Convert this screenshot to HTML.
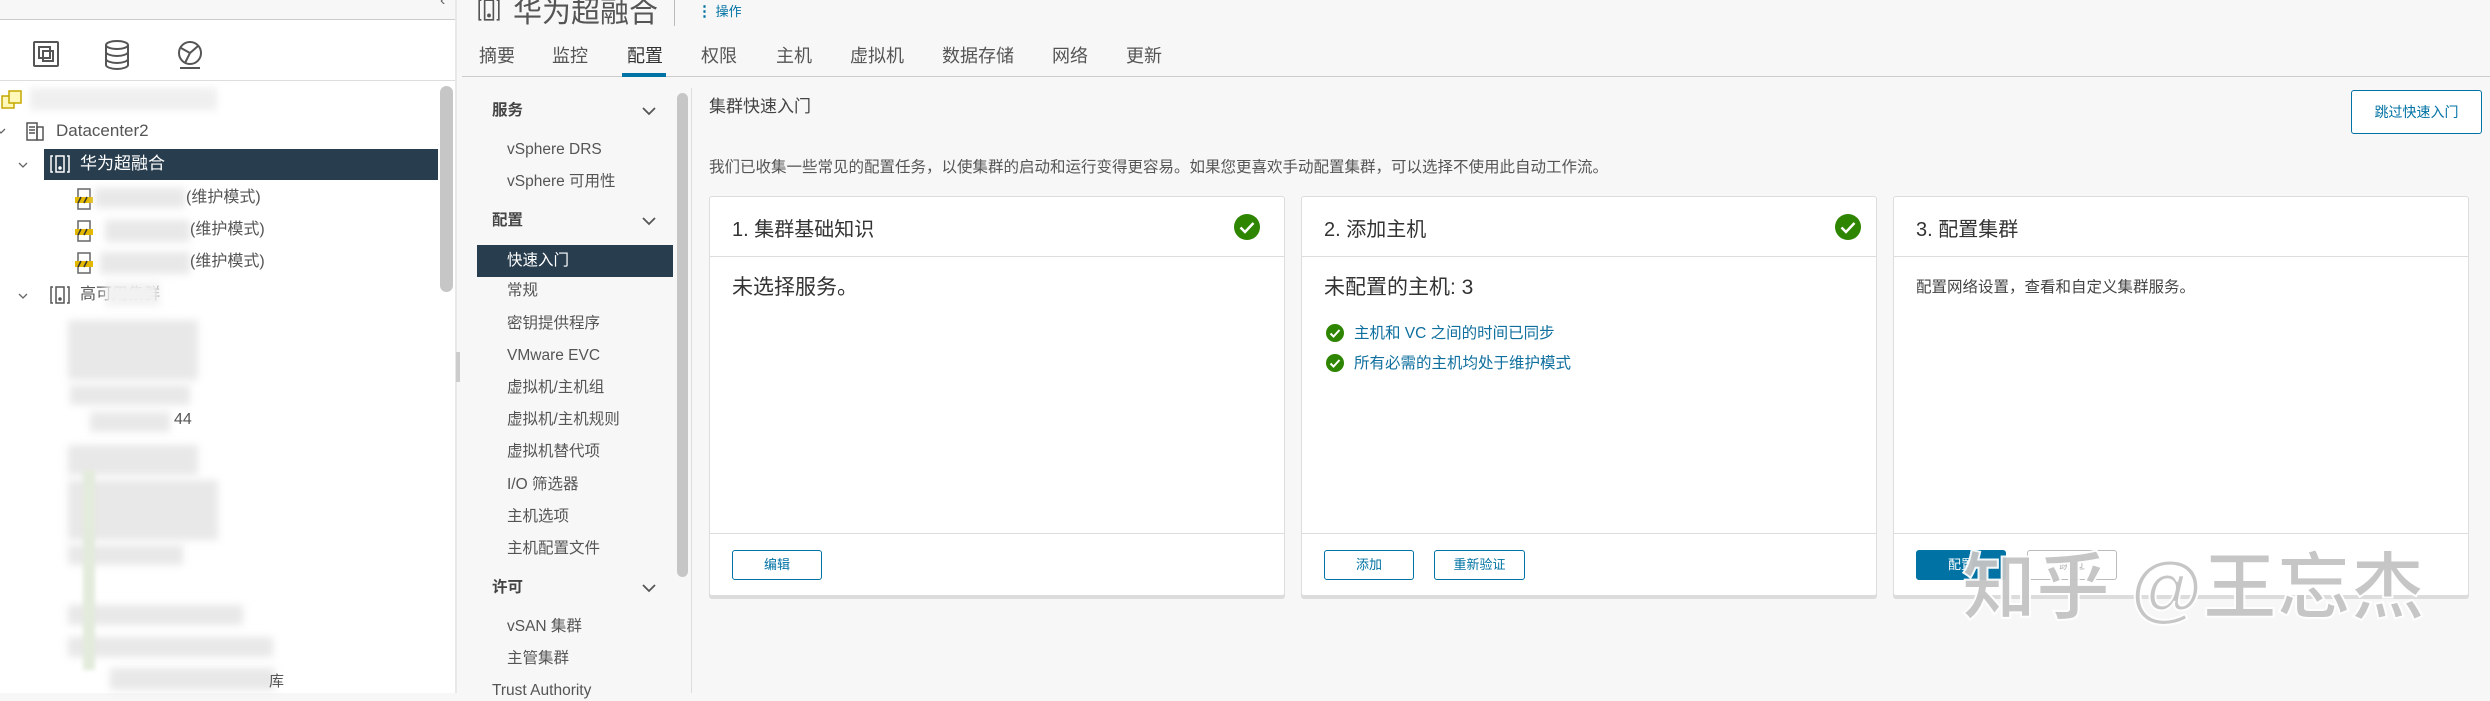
<!DOCTYPE html>
<html><head><meta charset="utf-8"><style>
*{margin:0;padding:0;box-sizing:border-box}
body{width:2490px;height:693px;overflow:hidden;background:#f7f7f7;font-family:"Liberation Sans","Noto Sans CJK SC",sans-serif;color:#444;position:relative}
.a{position:absolute;white-space:nowrap}
.t{font-size:16px;line-height:20px}
.nav{font-size:15.5px;color:#555;line-height:20px}
.card{position:absolute;top:196px;width:576px;height:400px;background:#fff;border:1px solid #ddd;border-radius:3px;box-shadow:0 3px 0 #dcdcdc}
.card .hd{position:absolute;left:0;right:0;top:0;height:60px;border-bottom:1px solid #ddd}
.card .ft{position:absolute;left:0;right:0;top:336px;border-top:1px solid #ddd}
.btn{position:absolute;height:30px;border:1px solid #0072a3;border-radius:3px;color:#0072a3;font-size:13px;line-height:28px;text-align:center;background:#fff}
.blur{position:absolute;background:#e8e8e8;filter:blur(4px)}
.tab{position:absolute;top:44px;font-size:18px;line-height:24px;color:#555;white-space:nowrap}
</style></head><body>
<!-- left panel -->
<div class="a" style="left:0;top:0;width:457px;height:693px;background:#fff"></div>
<div class="a" style="left:0;top:0;width:457px;height:20px;background:#f7f7f7;border-bottom:1px solid #ccc"></div>
<div class="a" style="left:440px;top:-8px;font-size:16px;color:#666">‹</div>
<div class="a" style="left:0;top:80px;width:457px;height:1px;background:#ddd"></div>
<svg class="a" style="left:32px;top:40px" width="30" height="30" viewBox="0 0 30 30" fill="none" stroke="#555" stroke-width="2"><rect x="2" y="2" width="24" height="24" rx="1"/><rect x="7" y="7" width="11" height="11"/><rect x="11" y="11" width="10" height="10"/></svg>
<svg class="a" style="left:103px;top:40px" width="28" height="30" viewBox="0 0 28 30" fill="none" stroke="#555" stroke-width="2"><ellipse cx="14" cy="5" rx="11" ry="4"/><path d="M3 5v20c0 2 5 4 11 4s11-2 11-4V5M3 12c0 2 5 4 11 4s11-2 11-4M3 19c0 2 5 4 11 4s11-2 11-4"/></svg>
<svg class="a" style="left:175px;top:40px" width="30" height="30" viewBox="0 0 30 30" fill="none" stroke="#555" stroke-width="2"><circle cx="15" cy="13" r="11"/><path d="M6 8l9 5 8-7M15 13l-5 10M5 28h20"/></svg>
<!-- tree -->
<svg class="a" style="left:1px;top:89px" width="22" height="22" viewBox="0 0 22 22" fill="#fff8b8" stroke="#c4a800" stroke-width="1.5"><rect x="1" y="7" width="12" height="12"/><rect x="8" y="2" width="12" height="12"/></svg>
<div class="blur" style="left:30px;top:88px;width:187px;height:22px;background:#efefef"></div>
<svg class="a" style="left:-4px;top:127px" width="10" height="8" viewBox="0 0 10 8" fill="none" stroke="#666" stroke-width="1.3"><path d="M1 2l4 4 4-4"/></svg>
<svg class="a" style="left:26px;top:121px" width="18" height="20" viewBox="0 0 18 20" fill="none" stroke="#555" stroke-width="1.5"><rect x="1" y="2" width="10" height="17"/><rect x="11" y="6" width="6" height="13"/><path d="M3 6h6M3 9h6M3 12h6"/></svg>
<div class="a" style="left:56px;top:120px;font-size:17px;line-height:22px;color:#555">Datacenter2</div>
<div class="a" style="left:44px;top:149px;width:394px;height:31px;background:#283d4e"></div>
<svg class="a" style="left:18px;top:161px" width="10" height="8" viewBox="0 0 10 8" fill="none" stroke="#666" stroke-width="1.3"><path d="M1 2l4 4 4-4"/></svg>
<svg class="a" style="left:50px;top:154px" width="20" height="20" viewBox="0 0 20 20" fill="none" stroke="#fff" stroke-width="1.5"><path d="M3 2H1v16h2M17 2h2v16h-2"/><rect x="6" y="2" width="8" height="16"/><circle cx="10" cy="14" r="1" fill="#fff"/></svg>
<div class="a" style="left:80px;top:153px;font-size:17px;line-height:22px;color:#fff">华为超融合</div>
<svg class="a" style="left:75px;top:188px" width="18" height="22" viewBox="0 0 18 22"><rect x="3" y="1" width="12" height="20" fill="#fff" stroke="#666" stroke-width="1.5"/><rect x="0" y="9" width="18" height="6" fill="#e2b800"/><path d="M3 15l3-6M9 15l3-6" stroke="#333" stroke-width="1.5"/></svg>
<svg class="a" style="left:75px;top:220px" width="18" height="22" viewBox="0 0 18 22"><rect x="3" y="1" width="12" height="20" fill="#fff" stroke="#666" stroke-width="1.5"/><rect x="0" y="9" width="18" height="6" fill="#e2b800"/><path d="M3 15l3-6M9 15l3-6" stroke="#333" stroke-width="1.5"/></svg>
<svg class="a" style="left:75px;top:252px" width="18" height="22" viewBox="0 0 18 22"><rect x="3" y="1" width="12" height="20" fill="#fff" stroke="#666" stroke-width="1.5"/><rect x="0" y="9" width="18" height="6" fill="#e2b800"/><path d="M3 15l3-6M9 15l3-6" stroke="#333" stroke-width="1.5"/></svg>
<div class="blur" style="left:95px;top:188px;width:90px;height:20px"></div>
<div class="blur" style="left:105px;top:220px;width:85px;height:22px"></div>
<div class="blur" style="left:100px;top:252px;width:90px;height:22px"></div>
<div class="a t" style="left:186px;top:188px;color:#555">(维护模式)</div>
<div class="a t" style="left:190px;top:220px;color:#555">(维护模式)</div>
<div class="a t" style="left:190px;top:252px;color:#555">(维护模式)</div>
<svg class="a" style="left:18px;top:292px" width="10" height="8" viewBox="0 0 10 8" fill="none" stroke="#666" stroke-width="1.3"><path d="M1 2l4 4 4-4"/></svg>
<svg class="a" style="left:50px;top:285px" width="20" height="20" viewBox="0 0 20 20" fill="none" stroke="#555" stroke-width="1.5"><path d="M3 2H1v16h2M17 2h2v16h-2"/><rect x="6" y="2" width="8" height="16"/><circle cx="10" cy="14" r="1" fill="#555"/></svg>
<div class="a" style="left:80px;top:284px;font-size:16px;line-height:22px;color:#555">高可用集群</div>
<div class="blur" style="left:105px;top:282px;width:55px;height:24px;background:#f2f2f2"></div>
<div class="blur" style="left:68px;top:320px;width:130px;height:60px"></div>
<div class="blur" style="left:70px;top:385px;width:120px;height:20px"></div>
<div class="blur" style="left:90px;top:412px;width:80px;height:20px"></div>
<div class="a" style="left:174px;top:411px;font-size:16px;color:#555">44</div>
<div class="blur" style="left:68px;top:445px;width:130px;height:30px"></div>
<div class="blur" style="left:68px;top:480px;width:150px;height:60px"></div>
<div class="blur" style="left:68px;top:545px;width:115px;height:20px"></div>
<div class="blur" style="left:68px;top:605px;width:175px;height:20px"></div>
<div class="blur" style="left:68px;top:637px;width:205px;height:20px"></div>
<div class="a" style="left:83px;top:470px;width:12px;height:200px;background:#e3ebdc;filter:blur(2px)"></div>
<div class="blur" style="left:110px;top:668px;width:165px;height:22px"></div>
<div class="a" style="left:269px;top:670px;font-size:15px;color:#555">库</div>
<div class="a" style="left:440px;top:86px;width:13px;height:206px;background:#c6c6c6;border-radius:7px"></div>
<div class="a" style="left:455px;top:0;width:2px;height:693px;background:#e8e8e8"></div>
<div class="a" style="left:456px;top:352px;width:4px;height:30px;background:#ccc"></div>
<!-- header -->
<svg class="a" style="left:478px;top:-2px" width="22" height="24" viewBox="0 0 20 22" fill="none" stroke="#555" stroke-width="1.5"><path d="M3 2H1v18h2M17 2h2v18h-2"/><rect x="6" y="2" width="8" height="18"/><circle cx="10" cy="16" r="1" fill="#555"/></svg>
<div class="a" style="left:513px;top:-11px;font-size:29px;color:#555">华为超融合</div>
<div class="a" style="left:674px;top:0;width:1px;height:26px;background:#bbb"></div>
<div class="a" style="left:697px;top:1px;font-size:13px;color:#0072a3"><b style="font-size:15px">⋮</b> 操作</div>
<div class="a" style="left:462px;top:76px;width:2028px;height:1px;background:#ccc"></div>
<div class="tab" style="left:479px">摘要</div>
<div class="tab" style="left:552px">监控</div>
<div class="tab" style="left:627px;color:#333">配置</div>
<div class="a" style="left:622px;top:73px;width:44px;height:4px;background:#0072a3"></div>
<div class="tab" style="left:701px">权限</div>
<div class="tab" style="left:776px">主机</div>
<div class="tab" style="left:850px">虚拟机</div>
<div class="tab" style="left:942px">数据存储</div>
<div class="tab" style="left:1052px">网络</div>
<div class="tab" style="left:1126px">更新</div>
<!-- config nav -->
<div class="a" style="left:462px;top:88px;width:212px;height:605px;background:#f7f7f7"></div>
<div class="a" style="left:677px;top:93px;width:11px;height:484px;background:#c6c6c6;border-radius:6px"></div>
<div class="a" style="left:691px;top:88px;width:1px;height:605px;background:#ddd"></div>
<div class="a nav" style="left:492px;top:101px;font-weight:bold;color:#444">服务</div>
<svg class="a" style="left:641px;top:106px" width="16" height="10" viewBox="0 0 16 10" fill="none" stroke="#555" stroke-width="1.8"><path d="M2 2l6 6 6-6"/></svg>
<div class="a nav" style="left:507px;top:140px">vSphere DRS</div>
<div class="a nav" style="left:507px;top:172px">vSphere 可用性</div>
<div class="a nav" style="left:492px;top:211px;font-weight:bold;color:#444">配置</div>
<svg class="a" style="left:641px;top:216px" width="16" height="10" viewBox="0 0 16 10" fill="none" stroke="#555" stroke-width="1.8"><path d="M2 2l6 6 6-6"/></svg>
<div class="a" style="left:477px;top:245px;width:196px;height:32px;background:#283d4e"></div>
<div class="a nav" style="left:507px;top:251px;color:#fff">快速入门</div>
<div class="a nav" style="left:507px;top:281px">常规</div>
<div class="a nav" style="left:507px;top:314px">密钥提供程序</div>
<div class="a nav" style="left:507px;top:346px">VMware EVC</div>
<div class="a nav" style="left:507px;top:378px">虚拟机/主机组</div>
<div class="a nav" style="left:507px;top:410px">虚拟机/主机规则</div>
<div class="a nav" style="left:507px;top:442px">虚拟机替代项</div>
<div class="a nav" style="left:507px;top:475px">I/O 筛选器</div>
<div class="a nav" style="left:507px;top:507px">主机选项</div>
<div class="a nav" style="left:507px;top:539px">主机配置文件</div>
<div class="a nav" style="left:492px;top:578px;font-weight:bold;color:#444">许可</div>
<svg class="a" style="left:641px;top:583px" width="16" height="10" viewBox="0 0 16 10" fill="none" stroke="#555" stroke-width="1.8"><path d="M2 2l6 6 6-6"/></svg>
<div class="a nav" style="left:507px;top:617px">vSAN 集群</div>
<div class="a nav" style="left:507px;top:649px">主管集群</div>
<div class="a nav" style="left:492px;top:681px">Trust Authority</div>
<!-- main -->
<div class="a" style="left:709px;top:92px;font-size:17px;color:#444">集群快速入门</div>
<div class="btn" style="left:2351px;top:90px;width:131px;height:44px;line-height:42px;font-size:14px">跳过快速入门</div>
<div class="a" style="left:709px;top:155px;font-size:15.5px;color:#555">我们已收集一些常见的配置任务，以使集群的启动和运行变得更容易。如果您更喜欢手动配置集群，可以选择不使用此自动工作流。</div>

<div class="card" style="left:709px">
 <div class="hd"></div>
 <div class="a" style="left:22px;top:16px;font-size:20px;color:#333">1. 集群基础知识</div>
 <svg class="a" style="left:523px;top:16px" width="28" height="28" viewBox="0 0 28 28"><circle cx="14" cy="14" r="13" fill="#2e8500"/><path d="M7.5 14.5l4.5 4.5 8.5-9" stroke="#fff" stroke-width="2.5" fill="none"/></svg>
 <div class="a" style="left:22px;top:74px;font-size:21px;color:#333">未选择服务。</div>
 <div class="ft"></div>
 <div class="btn" style="left:22px;top:353px;width:90px">编辑</div>
</div>
<div class="card" style="left:1301px">
 <div class="hd"></div>
 <div class="a" style="left:22px;top:16px;font-size:20px;color:#333">2. 添加主机</div>
 <svg class="a" style="left:532px;top:16px" width="28" height="28" viewBox="0 0 28 28"><circle cx="14" cy="14" r="13" fill="#2e8500"/><path d="M7.5 14.5l4.5 4.5 8.5-9" stroke="#fff" stroke-width="2.5" fill="none"/></svg>
 <div class="a" style="left:22px;top:74px;font-size:21px;color:#333">未配置的主机: 3</div>
 <svg class="a" style="left:23px;top:126px" width="20" height="20" viewBox="0 0 20 20"><circle cx="10" cy="10" r="9" fill="#2e8500"/><path d="M5.5 10.5l3 3 6-6.5" stroke="#fff" stroke-width="2" fill="none"/></svg>
 <div class="a" style="left:52px;top:124px;font-size:15.5px;color:#0e6f9e">主机和 VC 之间的时间已同步</div>
 <svg class="a" style="left:23px;top:156px" width="20" height="20" viewBox="0 0 20 20"><circle cx="10" cy="10" r="9" fill="#2e8500"/><path d="M5.5 10.5l3 3 6-6.5" stroke="#fff" stroke-width="2" fill="none"/></svg>
 <div class="a" style="left:52px;top:154px;font-size:15.5px;color:#0e6f9e">所有必需的主机均处于维护模式</div>
 <div class="ft"></div>
 <div class="btn" style="left:22px;top:353px;width:90px">添加</div>
 <div class="btn" style="left:132px;top:353px;width:91px">重新验证</div>
</div>
<div class="card" style="left:1893px">
 <div class="hd"></div>
 <div class="a" style="left:22px;top:16px;font-size:20px;color:#333">3. 配置集群</div>
 <div class="a" style="left:22px;top:78px;font-size:15.5px;color:#444">配置网络设置，查看和自定义集群服务。</div>
 <div class="ft"></div>
 <div class="btn" style="left:22px;top:353px;width:90px;background:#0072a3;color:#fff">配置</div>
 <div class="btn" style="left:133px;top:353px;width:90px;border-color:#bbb;color:#bbb">跳过</div>
</div>
<div class="a" style="left:1962px;top:545px;font-size:74px;line-height:86px;font-weight:bold;color:#c4c4c4;-webkit-text-stroke:2px #fff;opacity:.95">知乎 @王忘杰</div>
</body></html>
